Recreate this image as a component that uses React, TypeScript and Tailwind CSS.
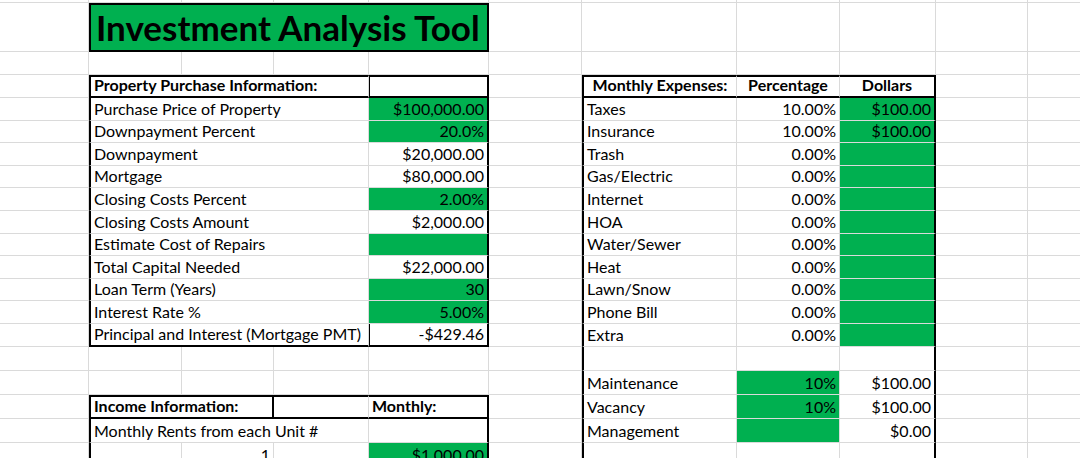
import React from "react";

type C = { t?: string; s?: number; c?: string };
const G = "bg-[#00b050]";
const BL = "!border-l-2 !border-l-black";
const BR = "!border-r-2 !border-r-black";
const BT = "!border-t-2 !border-t-black";
const BB = "!border-b-2 !border-b-black";
const R = "justify-end";
const B = "font-bold";
const CEN = "justify-center";

const e = (n: number): C[] => Array.from({ length: n }, () => ({}));

const left: [string, string, boolean][] = [
  ["Purchase Price of Property", "$100,000.00", true],
  ["Downpayment Percent", "20.0%", true],
  ["Downpayment", "$20,000.00", false],
  ["Mortgage", "$80,000.00", false],
  ["Closing Costs Percent", "2.00%", true],
  ["Closing Costs Amount", "$2,000.00", false],
  ["Estimate Cost of Repairs", "", true],
  ["Total Capital Needed", "$22,000.00", false],
  ["Loan Term (Years)", "30", true],
  ["Interest Rate %", "5.00%", true],
  ["Principal and Interest (Mortgage PMT)", "-$429.46", false],
];
const right: [string, string, string][] = [
  ["Taxes", "10.00%", "$100.00"],
  ["Insurance", "10.00%", "$100.00"],
  ["Trash", "0.00%", ""],
  ["Gas/Electric", "0.00%", ""],
  ["Internet", "0.00%", ""],
  ["HOA", "0.00%", ""],
  ["Water/Sewer", "0.00%", ""],
  ["Heat", "0.00%", ""],
  ["Lawn/Snow", "0.00%", ""],
  ["Phone Bill", "0.00%", ""],
  ["Extra", "0.00%", ""],
];

const rows: C[][] = [];
rows.push(e(11));
rows.push([{}, { t: "Investment Analysis Tool", s: 4, c: `${G} !border-2 !border-black text-[35px] font-bold !items-center !pb-0 !px-[5px] !leading-none` }, ...e(6)]);
rows.push(e(11));
rows.push([
  {},
  { t: "Property Purchase Information:", s: 3, c: `${B} ${BL} ${BT} ${BB}` },
  { c: `${BT} ${BB} ${BR} !border-l !border-l-black` },
  {},
  { t: "Monthly Expenses:", c: `${B} ${CEN} ${BL} ${BT} ${BB}` },
  { t: "Percentage", c: `${B} ${CEN} ${BT} ${BB}` },
  { t: "Dollars", c: `${B} ${CEN} ${BT} ${BB} ${BR}` },
  {},
  {},
]);
left.forEach(([l, v, g], i) => {
  const last = i === left.length - 1;
  const [rl, rp, rd] = right[i];
  rows.push([
    {},
    { t: l, s: 3, c: `${BL} ${last ? BB : ""}` },
    { t: v, c: `${R} ${BR} ${g ? G : ""} ${last ? `${BB} !border-l !border-l-black` : ""}` },
    {},
    { t: rl, c: BL },
    { t: rp, c: R },
    { t: rd, c: `${R} ${BR} ${G}` },
    {},
    {},
  ]);
});
rows.push([...e(6), { c: BL }, {}, { c: BR }, {}, {}]);
rows.push([...e(6), { t: "Maintenance", c: BL }, { t: "10%", c: `${R} ${G}` }, { t: "$100.00", c: `${R} ${BR}` }, {}, {}]);
rows.push([
  {},
  { t: "Income Information:", s: 2, c: `${B} ${BL} ${BT} ${BB} !border-r-2 !border-r-black` },
  { c: `${BT} ${BB}` },
  { t: "Monthly:", c: `${B} ${BT} ${BB} ${BR}` },
  {},
  { t: "Vacancy", c: BL },
  { t: "10%", c: `${R} ${G}` },
  { t: "$100.00", c: `${R} ${BR}` },
  {},
  {},
]);
rows.push([
  {},
  { t: "Monthly Rents from each Unit #", s: 3, c: BL },
  { c: BR },
  {},
  { t: "Management", c: BL },
  { c: G },
  { t: "$0.00", c: `${R} ${BR}` },
  {},
  {},
]);
rows.push([
  {},
  { c: BL },
  { t: "1", c: R },
  {},
  { t: "$1,000.00", c: `${R} ${BR} ${G}` },
  {},
  { c: BL },
  {},
  { c: BR },
  {},
  {},
]);

const span = (s?: number) => (s === 2 ? "col-span-2" : s === 3 ? "col-span-3" : s === 4 ? "col-span-4" : "");

export default function App() {
  return (
    <div
      className="w-[1080px] h-[458px] overflow-hidden bg-white text-black text-[16px]"
      style={{ fontFamily: "Lato, 'Open Sans', sans-serif" }}
    >
      <div className="grid grid-cols-[89px_93px_92px_95px_120px_93px_155px_103px_96px_92px_60px] grid-rows-[3px_49px_23px_23px_repeat(11,22.6px)_repeat(5,24px)]">
        {rows.map((row, ri) =>
          row.map((cell, ci) => (
            <div
              key={`${ri}-${ci}`}
              className={`border-r border-b border-[#dadada] px-[3px] pb-[1px] flex items-end whitespace-nowrap overflow-hidden leading-[20px] ${span(cell.s)} ${cell.c ?? ""}`}
            >
              {cell.t}
            </div>
          ))
        )}
      </div>
    </div>
  );
}
